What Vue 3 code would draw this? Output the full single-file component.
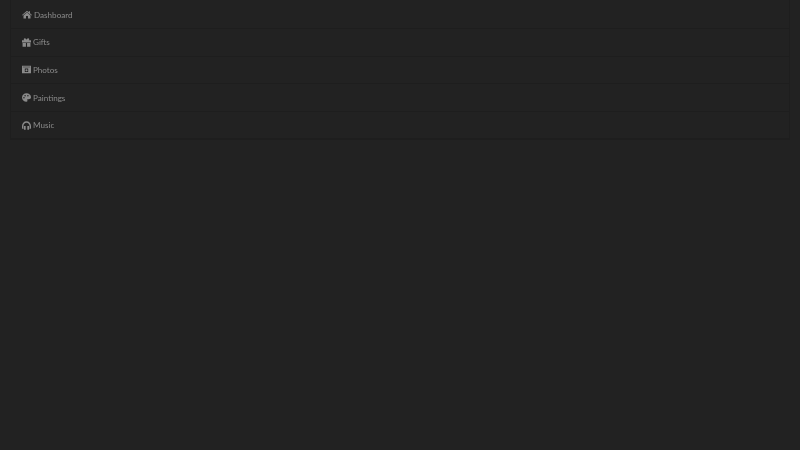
<template>
  <ul class="menu">
    <li v-for="item in items" :key="item.label" class="menu-item">
      <svg class="icon" :viewBox="item.box" aria-hidden="true">
        <path :d="item.path" fill="currentColor" fill-rule="evenodd" />
      </svg>
      <span>{{ item.label }}</span>
    </li>
  </ul>
</template>

<script setup>
const items = [
  {
    label: 'Dashboard',
    box: '0 -1 20 18',
    path: 'M10 0.5 L13.5 3.5 V1.5 H16 V5.6 L20 9 L18.9 10.2 L10 2.8 L1.1 10.2 L0 9 Z M10 4.2 L17 10 V16 H12 V11 H8 V16 H3 V10 Z',
  },
  {
    label: 'Gifts',
    box: '0 0 16 16',
    path: 'M0 4 H4 C2.2 2.6 3.2 0.5 5 0.5 C6.6 0.5 7.5 2 8 3 C8.5 2 9.4 0.5 11 0.5 C12.8 0.5 13.8 2.6 12 4 H16 V8 H0 Z M1 9 H7 V15.5 H1 Z M9 9 H15 V15.5 H9 Z',
  },
  {
    label: 'Photos',
    box: '0 0 16 16',
    path: 'M0 1.5 H16 V14.5 H0 Z M1.5 3 V4 H14.5 V3 Z M5 6 V12.5 H11 V6 Z M8 7.4 A1.9 1.9 0 1 1 7.99 7.4 Z',
  },
  {
    label: 'Paintings',
    box: '0 0 16 16',
    path: 'M8 0.5 C12.5 0.5 16 3.5 16 7.5 C16 10 14 11 12 11 H10.5 C9.3 11 9 12 9.5 13 C10 14 9.6 15.5 8 15.5 C3.6 15.5 0 12.2 0 8 C0 3.8 3.6 0.5 8 0.5 Z M3.5 7 A1.2 1.2 0 1 0 3.51 7 Z M5.5 3.5 A1.2 1.2 0 1 0 5.51 3.5 Z M10.5 3.5 A1.2 1.2 0 1 0 10.51 3.5 Z',
  },
  {
    label: 'Music',
    box: '0 0 16 16',
    path: 'M8 0.5 C3.4 0.5 0 4.2 0 9 V12.5 C0 13.3 0.5 14 1.5 14 H2.5 V9 C2.5 5.6 4.9 3.2 8 3.2 C11.1 3.2 13.5 5.6 13.5 9 V14 H14.5 C15.5 14 16 13.3 16 12.5 V9 C16 4.2 12.6 0.5 8 0.5 Z M3.5 9 H6.5 V15.5 H3.5 Z M9.5 9 H12.5 V15.5 H9.5 Z',
  },
]
</script>

<style>
html,
body {
  margin: 0;
  background: #222222;
}
</style>

<style scoped>
.menu {
  list-style: none;
  margin: 0 10px;
  padding: 1.5px 0 0;
  border: 1px solid #1e1e1e;
  border-top: 0;
  font-family: Lato, sans-serif;
  font-size: 8.1px;
  color: #8a8a8a;
  will-change: opacity;
}
.menu-item {
  display: flex;
  align-items: center;
  gap: 2px;
  height: 27.6px;
  padding-left: 11px;
  box-sizing: border-box;
  border-bottom: 1px solid #1e1e1e;
}
.icon {
  width: auto;
  height: 9px;
}
</style>
